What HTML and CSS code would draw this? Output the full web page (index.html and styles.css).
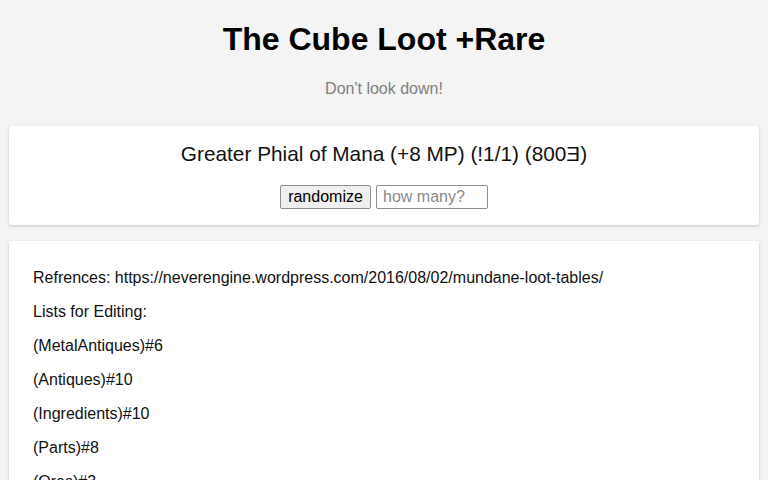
FILE: index.html
```html
<!DOCTYPE html>
<html>
<head>
<meta charset="utf-8">
<link rel="stylesheet" href="styles.css">
</head>
<body>
<header class="header">
  <h1 class="title">The Cube Loot +Rare</h1>
  <p class="subtitle">Don't look down!</p>
</header>
<section class="card result-card">
  <p class="result">Greater Phial of Mana (+8 MP) (!1/1) (800Ǝ)</p>
  <div class="controls">
    <button class="btn">randomize</button>
    <input class="count" type="text" placeholder="how many?">
  </div>
</section>
<section class="card info-card">
  <p class="line">Refrences: https://neverengine.wordpress.com/2016/08/02/mundane-loot-tables/</p>
  <p class="line">Lists for Editing:</p>
  <p class="line">(MetalAntiques)#6</p>
  <p class="line">(Antiques)#10</p>
  <p class="line">(Ingredients)#10</p>
  <p class="line">(Parts)#8</p>
  <p class="line">(Ores)#3</p>
  <p class="line">(Gems)#5</p>
</section>
</body>
</html>
```
FILE: styles.css
```css
html, body {
  background: #f4f4f4;
}
body {
  margin: 0;
  padding: 0 9px;
  font-family: "Liberation Sans", Arial, sans-serif;
  color: #111;
}
.header {
  text-align: center;
  padding-top: 21px;
}
.title {
  margin: 0;
  font-size: 32px;
  line-height: 37px;
  font-weight: bold;
  color: #000;
}
.subtitle {
  margin: 22px 0 0;
  font-size: 16px;
  line-height: 18px;
  color: #808080;
}
.card {
  background: #fff;
  border-radius: 2px;
  box-shadow: 0 1px 3px rgba(0,0,0,0.18);
}
.result-card {
  margin-top: 28px;
  padding: 16px 24px 16px;
  text-align: center;
}
.result {
  margin: 0;
  font-size: 20.8px;
  line-height: 24px;
  color: #111;
}
.controls {
  margin-top: 19px;
  display: flex;
  justify-content: center;
  gap: 5px;
}
.btn {
  font-family: "Liberation Sans", Arial, sans-serif;
  font-size: 16px;
  line-height: 18px;
  padding: 2px 7px;
  background: #efefef;
  border: 1px solid #8f8f8f;
  border-radius: 2px;
  color: #000;
  width: 91px;
}
.count {
  font-family: "Liberation Sans", Arial, sans-serif;
  font-size: 16px;
  line-height: 18px;
  padding: 1px 6px;
  width: 98px;
  border: 1px solid #8f8f8f;
  border-radius: 2px;
  background: #fff;
}
.count::placeholder {
  color: #8a8a8a;
}
.info-card {
  margin-top: 16px;
  padding: 12px 24px;
}
.line {
  margin: 16px 0;
  font-size: 16px;
  line-height: 18px;
  color: #111;
}
```
